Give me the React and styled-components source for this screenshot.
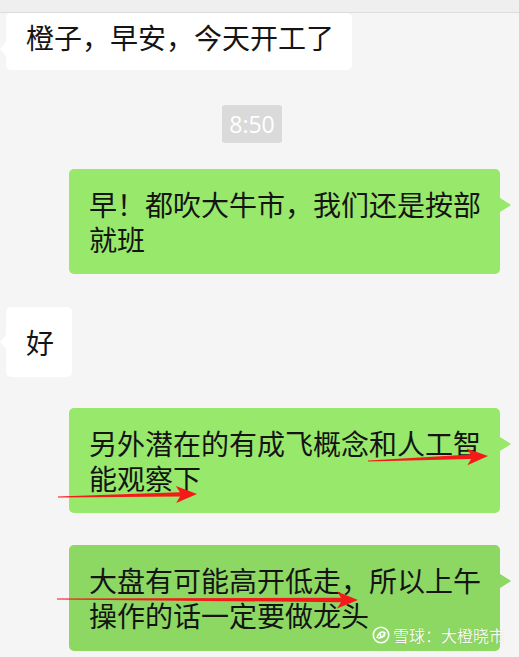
import React from 'react';
import styled, { createGlobalStyle } from 'styled-components';

const GlobalStyle = createGlobalStyle`
  html, body {
    margin: 0;
    padding: 0;
    background: #f5f5f5;
  }
`;

const Screen = styled.div`
  width: 519px;
  height: 657px;
  overflow: hidden;
  background: #f5f5f5;
  font-family: "Noto Sans CJK SC", "Noto Sans", sans-serif;
  color: #141414;
`;

const TopStrip = styled.div`
  height: 12px;
  background: #efefef;
  border-bottom: 1px solid #dcdcdc;
`;

const Row = styled.div`
  display: flex;
  justify-content: ${(p) => (p.$mine ? 'flex-end' : 'flex-start')};
  padding: ${(p) => (p.$mine ? '0 19px 0 0' : '0 0 0 6px')};
  margin-top: ${(p) => p.$gap || 0}px;
`;

const Bubble = styled.div`
  position: relative;
  box-sizing: border-box;
  width: ${(p) => (p.$mine ? '431px' : 'auto')};
  padding: ${(p) => p.$pad || '18px 18px 17px 20px'};
  border-radius: 5px;
  background: ${(p) => p.$bg || '#ffffff'};
  font-size: 28px;
  line-height: 35px;
  word-break: break-all;

  &::after {
    content: '';
    position: absolute;
    top: ${(p) => p.$tail || 29}px;
    ${(p) => (p.$mine ? 'right: -11px;' : 'left: -6px;')}
    border-top: 7px solid transparent;
    border-bottom: 7px solid transparent;
    ${(p) =>
      p.$mine
        ? `border-left: 11px solid ${p.$bg};`
        : 'border-right: 6px solid #ffffff;'}
  }
`;

const TimeRow = styled.div`
  display: flex;
  justify-content: center;
  padding-right: 15px;
  margin-top: 35px;
`;

const TimeTag = styled.div`
  width: 60px;
  height: 38px;
  border-radius: 3px;
  background: #dadada;
  color: #ffffff;
  font-family: "Open Sans", "Liberation Sans", sans-serif;
  font-size: 23px;
  line-height: 38px;
  text-align: center;
`;

const Marks = styled.svg`
  position: absolute;
  left: 0;
  top: 0;
  overflow: visible;
  pointer-events: none;
`;

const Watermark = styled.div`
  position: absolute;
  right: -5px;
  bottom: 5px;
  display: flex;
  align-items: center;
  gap: 3px;
  color: rgba(255, 255, 255, 0.95);
  font-size: 16px;
  line-height: 22px;
  text-shadow: 0 0 1px rgba(0, 0, 0, 0.2);
`;

const Arrow = ({ x0, y0, x1, y1 }) => {
  const len = Math.hypot(x1 - x0, y1 - y0);
  const dx = (x1 - x0) / len;
  const dy = (y1 - y0) / len;
  const nx = -dy;
  const ny = dx;
  const head = 17;
  const bx = x1 - dx * head;
  const by = y1 - dy * head;
  const cx = bx - dx * 4;
  const cy = by - dy * 4;
  const pts = [
    [x0 + nx * 0.6, y0 + ny * 0.6],
    [bx + nx * 2.2, by + ny * 2.2],
    [cx + nx * 8.5, cy + ny * 8.5],
    [x1, y1],
    [cx - nx * 8.5, cy - ny * 8.5],
    [bx - nx * 2.2, by - ny * 2.2],
    [x0 - nx * 0.6, y0 - ny * 0.6],
  ];
  return <polygon points={pts.map((p) => p.join(',')).join(' ')} fill="#f51a1a" />;
};

const XueqiuLogo = () => (
  <svg width="18" height="18" viewBox="0 0 20 20">
    <circle cx="10" cy="10" r="8.6" fill="none" stroke="#fff" strokeWidth="1.8" />
    <path d="M5.5 13.5 C7 8 10 6 13 7 C15 8 14.5 11 12 12 C9.5 13 8.5 10 10 8.5" fill="none" stroke="#fff" strokeWidth="1.7" />
    <path d="M14.5 6.5 C13 12 10 14 7 13" fill="none" stroke="#fff" strokeWidth="1.7" />
  </svg>
);

export default function App() {
  return (
    <Screen>
      <GlobalStyle />
      <TopStrip />

      <Row>
        <Bubble $pad="7px 18px 15px 20px">橙子，早安，今天开工了</Bubble>
      </Row>

      <TimeRow>
        <TimeTag>8:50</TimeTag>
      </TimeRow>

      <Row $mine $gap={26}>
        <Bubble $mine $bg="#98e86b" $tail={29}>
          早！都吹大牛市，我们还是按部就班
        </Bubble>
      </Row>

      <Row $gap={33}>
        <Bubble $tail={28}>好</Bubble>
      </Row>

      <Row $mine $gap={31}>
        <Bubble $mine $bg="#98e86b" $tail={29}>
          另外潜在的有成飞概念和人工智能观察下
          <Marks width="431" height="105">
            <Arrow x0={299} y0={53} x1={419} y1={48} />
            <Arrow x0={-11} y0={89} x1={128} y1={86} />
          </Marks>
        </Bubble>
      </Row>

      <Row $mine $gap={32}>
        <Bubble $mine $bg="#8cd862" $tail={29} $pad="18px 18px 18px 20px">
          大盘有可能高开低走，所以上午操作的话一定要做龙头
          <Marks width="431" height="106">
            <Arrow x0={-12} y0={54} x1={289} y1={55} />
          </Marks>
          <Watermark>
            <XueqiuLogo />
            <span>雪球：大橙晓市</span>
          </Watermark>
        </Bubble>
      </Row>
    </Screen>
  );
}
